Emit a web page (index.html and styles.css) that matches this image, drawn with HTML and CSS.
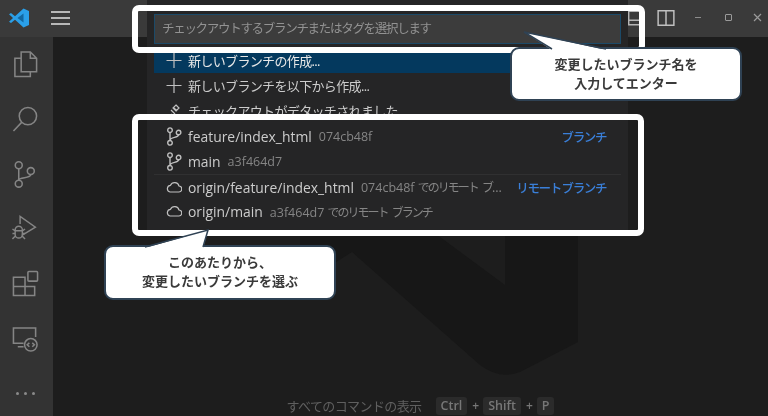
FILE: index.html
```html
<!DOCTYPE html>
<html lang="ja">
<head>
<meta charset="utf-8">
<title>VS Code</title>
<link rel="stylesheet" href="styles.css">
</head>
<body>
<div class="app">
  <header class="titlebar">
    <svg class="logo" viewBox="0 0 20 20"><path fill="#2a9fe8" d="M14.500 0.500 20 3v14l-5.500 2.500L6 11.800 2 15 0 13.800 4 10 0 6.200 2 5l4 3.200z"/><path fill="#12679f" d="M14.500 5.500 8.500 10l6 4.500z"/></svg>
    <div class="menu"><i></i><i></i><i></i></div>
    <div class="title-space"></div>
    <div class="win-icons">
      <svg class="win-ic" viewBox="0 0 16 16"><path d="M1.500 2h13v12h-13zM1.500 10h13" fill="none" stroke="#b5b5b5" stroke-width="1.300"/></svg>
      <svg class="win-ic panel" viewBox="0 0 16 16"><path d="M1 1.500h14v13H1zM8 1.500v13" fill="none" stroke="#c0c0c0" stroke-width="1.300"/></svg>
      <span class="min"></span>
      <span class="max"></span>
      <svg class="close" viewBox="0 0 9 9"><path d="M1 1l7 7M8 1L1 8" stroke="#9a9a9a" stroke-width="1.200"/></svg>
    </div>
  </header>
  <div class="body-row">
    <nav class="activity">
      <svg class="act" viewBox="0 0 28 28"><path d="M9.500 8H3v19h16v-5M9.500 1.500H19l6.500 6.500v14H9.500zM19 1.500V8h6.500"/></svg>
      <svg class="act" viewBox="0 0 28 28"><circle cx="16.500" cy="11" r="9"/><path d="M10 17.500 1.500 26.500"/></svg>
      <svg class="act" viewBox="0 0 28 28"><circle cx="7" cy="5" r="3.600"/><circle cx="7" cy="24" r="3.600"/><circle cx="19.500" cy="11" r="3.600"/><path d="M7 8.600v11.800M19.500 14.600c0 4.500-12.500 2-12.500 6"/></svg>
      <svg class="act" viewBox="0 0 30 30"><path d="M9 9.500V1l17 12-15 9"/><path d="M7.500 12a4 4 0 0 1 4 4v5a4 4 0 0 1-8 0v-5a4 4 0 0 1 4-4zM3.500 17h8M0.500 15l3 2M14.500 15l-3 2M0.500 20h3M14.500 20h-3M0.500 26l3-3M14.500 26l-3-3"/></svg>
      <svg class="act" viewBox="0 0 28 28"><path d="M1.500 7h12v19h-12zM1.500 16.500h22V26h-10M13.500 7v9.500"/><rect x="16.500" y="1" width="10" height="10" rx="1"/></svg>
      <svg class="act" viewBox="0 0 28 28"><path d="M12 18.500H1.500v-16h23V12M6 22h6"/><circle cx="19.500" cy="20" r="6.500"/><path d="M18 18l-2.200 2 2.200 2M21 18l2.200 2-2.200 2"/></svg>
      <div class="dots"><i></i><i></i><i></i></div>
    </nav>
    <main class="editor">
      <svg class="watermark" viewBox="53 37 715 379"><path fill="#171717" d="M300 200H390L505 285V200H578V342L520 372Q500 380 480 365L352 252 300 285z"/></svg>
      <div class="hint">
        <span class="hint-label">すべてのコマンドの表示</span>
        <kbd>Ctrl</kbd><span class="plus">+</span><kbd>Shift</kbd><span class="plus">+</span><kbd>P</kbd>
      </div>
    </main>
  </div>

  <section class="quick">
    <div class="qinput">チェックアウトするブランチまたはタグを選択します</div>
    <ul class="list">
      <li class="row sel"><svg class="ic" viewBox="0 0 16 19"><path d="M8 2v15M0.500 9.500h15"/></svg><span class="lab-jp">新しいブランチの作成...</span></li>
      <li class="row"><svg class="ic" viewBox="0 0 16 19"><path d="M8 2v15M0.500 9.500h15"/></svg><span class="lab-jp">新しいブランチを以下から作成...</span></li>
      <li class="row"><svg class="ic" viewBox="0 0 16 19"><path d="M2 17l4-4M5 9l4 4M8 7l3 3M10 4l3 3-3 3-3-3z"/></svg><span class="lab-jp">チェックアウトがデタッチされました...</span></li>
      <li class="row gap"><svg class="ic" viewBox="0 0 14 16"><circle cx="3.500" cy="2.500" r="2"/><circle cx="3.500" cy="13.500" r="2"/><circle cx="11" cy="4.500" r="2"/><path d="M3.500 4.500v7M11 6.500c0 3-7.500 1.500-7.500 5"/></svg><span class="lab">feature/index_html</span><span class="desc">074cb48f</span><span class="tag">ブランチ</span></li>
      <li class="row"><svg class="ic" viewBox="0 0 14 16"><circle cx="3.500" cy="2.500" r="2"/><circle cx="3.500" cy="13.500" r="2"/><circle cx="11" cy="4.500" r="2"/><path d="M3.500 4.500v7M11 6.500c0 3-7.500 1.500-7.500 5"/></svg><span class="lab">main</span><span class="desc">a3f464d7</span></li>
      <li class="row sep"><svg class="ic" viewBox="0 0 16 19"><path d="M4 14h8.500a3 3 0 0 0 .5-6A4.500 4.500 0 0 0 4.500 7.300 3.400 3.400 0 0 0 4 14z"/></svg><span class="lab">origin/feature/index_html</span><span class="desc">074cb48f <span class="desc-jp">でのリモート ブ</span>...</span><span class="tag">リモート ブランチ</span></li>
      <li class="row"><svg class="ic" viewBox="0 0 16 19"><path d="M4 14h8.500a3 3 0 0 0 .5-6A4.500 4.500 0 0 0 4.500 7.300 3.400 3.400 0 0 0 4 14z"/></svg><span class="lab">origin/main</span><span class="desc">a3f464d7 <span class="desc-jp">でのリモート ブランチ</span></span></li>
    </ul>
  </section>

  <div class="frame frame-top"></div>
  <div class="frame frame-list"></div>

  <div class="note note-input">
    <svg class="tail tail-input" viewBox="0 0 90 20"><path class="tail-fill" d="M3 1 85 19H31z"/><path class="tail-line" d="M31 18 3 1l82 17"/></svg>
    <p>変更したいブランチ名を<br>入力してエンター</p>
  </div>
  <div class="note note-list">
    <svg class="tail tail-list" viewBox="0 0 70 20"><path class="tail-fill" d="M65 1 60 19H2z"/><path class="tail-line" d="M2 18 65 1l-5 17"/></svg>
    <p>このあたりから、<br>変更したいブランチを選ぶ</p>
  </div>
</div>
</body>
</html>
```
FILE: styles.css
```css
* { box-sizing: border-box; }
html, body { margin: 0; padding: 0; }
body {
  width: 768px;
  height: 416px;
  overflow: hidden;
  background: #1d1d1d;
  font-family: "Open Sans", "Noto Sans CJK JP", sans-serif;
}
.app {
  position: relative;
  width: 768px;
  height: 416px;
  display: flex;
  flex-direction: column;
  overflow: hidden;
  filter: blur(0.35px);
}
.titlebar {
  height: 37px;
  flex: none;
  display: flex;
  align-items: center;
  background: #3a3a3a;
  padding: 0 6px 2px 9px;
}
.logo { width: 20px; height: 20px; flex: none; }
.menu {
  margin-left: 22px;
  width: 19px;
  display: flex;
  flex-direction: column;
  gap: 4px;
}
.menu i { display: block; height: 2px; background: #b8b8b8; }
.title-space { flex: 1; }
.win-icons { display: flex; align-items: center; }
.win-ic { width: 18px; height: 18px; }
.win-ic.panel { margin-left: 12px; }
.min { width: 6px; height: 1.500px; background: #8c8c8c; margin-left: 20px; }
.max { width: 7px; height: 7px; border: 1.500px solid #9a9a9a; border-radius: 1px; margin-left: 24px; }
.close { width: 9px; height: 9px; margin-left: 21px; }
.body-row { flex: 1; display: flex; min-height: 0; }
.activity {
  width: 53px;
  flex: none;
  background: #333333;
  display: flex;
  flex-direction: column;
  align-items: center;
  padding: 13px 2px 0 0;
  gap: 27px;
}
.act {
  width: 27px;
  height: 28px;
  fill: none;
  stroke: #858585;
  stroke-width: 1.600;
}
.dots { display: flex; gap: 5px; margin-top: 12px; }
.dots i { width: 3px; height: 3px; border-radius: 50%; background: #8a8a8a; }
.editor {
  position: relative;
  flex: 1;
  background: #1d1d1d;
  display: flex;
  flex-direction: column;
  justify-content: flex-end;
  align-items: center;
  padding-bottom: 1px;
}
.watermark { position: absolute; left: 0; top: 0; width: 715px; height: 379px; }
.hint {
  position: relative;
  display: flex;
  align-items: center;
  font-size: 13px;
  color: #5f5f5f;
  margin-left: 20px;
}
.hint-label { margin-right: 14px; letter-spacing: -0.6px; }
.hint kbd {
  font: inherit;
  font-size: 12.500px;
  font-weight: 600;
  color: #777;
  background: #2b2b2b;
  border-radius: 3px;
  padding: 0 5px;
  height: 18px;
  line-height: 18px;
}
.plus { margin: 0 4px 0 5px; font-size: 12px; font-weight: 600; color: #777; }
.quick {
  position: absolute;
  left: 147px;
  top: 0;
  width: 481px;
  height: 233px;
  background: #252526;
  padding: 14px 7px 0;
}
.qinput {
  height: 30px;
  line-height: 28px;
  background: #3c3c3c;
  border: 1px solid #1c4a68;
  padding: 0 7px;
  font-size: 12.500px;
  letter-spacing: -1.300px;
  color: #929292;
}
.list { list-style: none; margin: 4px 0 0; padding: 0; }
.row {
  height: 25px;
  display: flex;
  align-items: center;
  padding: 0 15px 0 12px;
  font-size: 13.900px;
  color: #cccccc;
  white-space: nowrap;
}
.row.sel { background: #04395e; color: #e8e8e8; }
.row.gap { margin-top: 1px; }
.row.sep { border-top: 1px solid #303031; }
.ic {
  width: 16px;
  height: 19px;
  flex: none;
  fill: none;
  stroke: #c0c0c0;
  stroke-width: 1.200;
  margin-right: 6px;
}
.lab { flex: none; }
.lab-jp { font-size: 13px; letter-spacing: -0.650px; }
.desc { margin-left: 7px; font-size: 12.500px; color: #858585; }
.desc-jp { font-size: 12px; letter-spacing: -2px; word-spacing: 3px; }
.tag { margin-left: auto; font-size: 12.500px; font-weight: 500; letter-spacing: -1.400px; word-spacing: -1px; color: #3a7fd8; }
.frame {
  position: absolute;
  left: 132px;
  width: 513px;
  background: transparent;
  border: 6px solid #ffffff;
  border-radius: 7px;
}
.frame-top { top: 5px; height: 48px; }
.frame-list { top: 114px; height: 122px; width: 512px; }
.note {
  position: absolute;
  background: #ffffff;
  border: 2px solid #2f4254;
  border-radius: 9px;
  display: flex;
  align-items: center;
  justify-content: center;
  text-align: center;
  padding-bottom: 3px;
}
.note p {
  margin: 0;
  font-family: "Noto Sans CJK JP", sans-serif;
  font-size: 13px;
  font-weight: 700;
  line-height: 19px;
  color: #3a3a3a;
}
.note-input { left: 510px; top: 47px; width: 232px; height: 54px; }
.note-list { left: 104px; top: 245px; width: 232px; height: 55px; }
.tail { position: absolute; overflow: visible; }
.tail-fill { fill: #ffffff; }
.tail-line { fill: none; stroke: #2f4254; stroke-width: 1.500; }
.tail-input { left: 9px; top: -18px; width: 90px; height: 20px; }
.tail-list { left: 37px; top: -18px; width: 70px; height: 20px; }
```
